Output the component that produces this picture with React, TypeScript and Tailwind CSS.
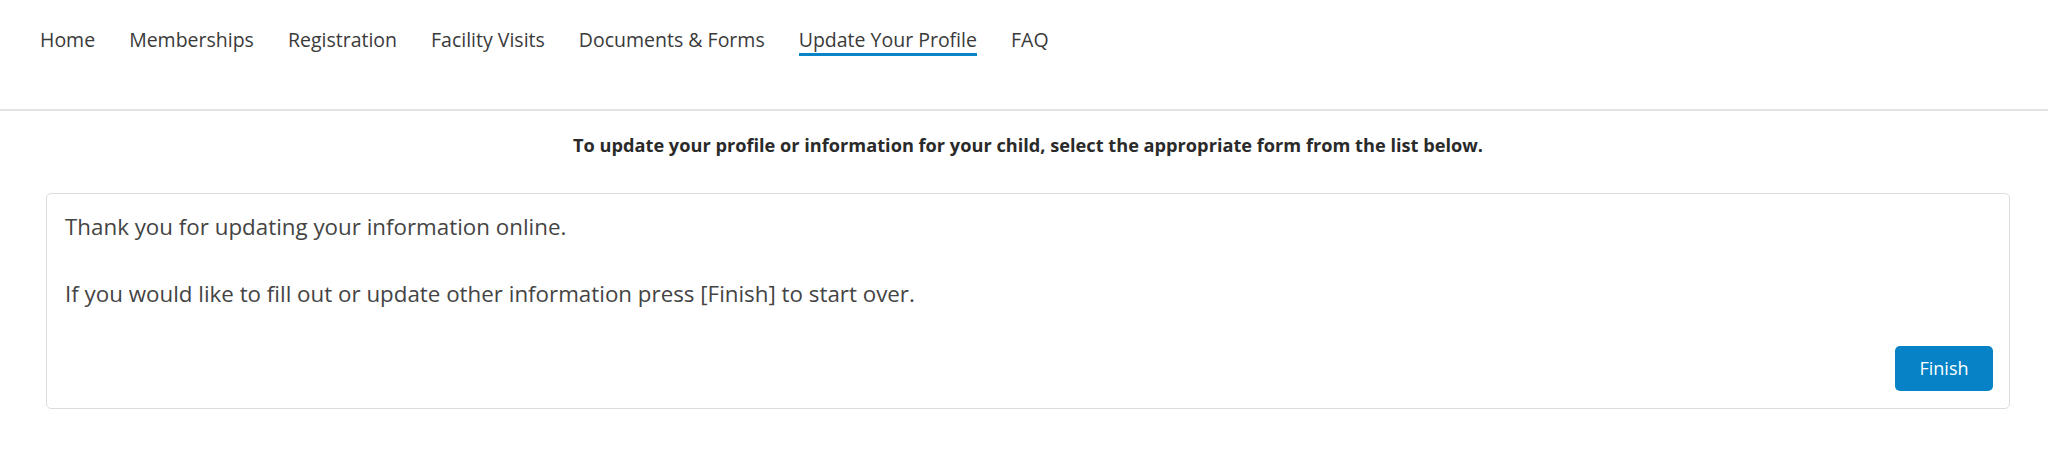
const navItems = [
  "Home",
  "Memberships",
  "Registration",
  "Facility Visits",
  "Documents & Forms",
  "Update Your Profile",
  "FAQ",
];

const ACTIVE = "Update Your Profile";

export default function App() {
  return (
    <div
      className="min-h-[461px] w-full bg-white text-[#3b3b3b]"
      style={{ fontFamily: '"Open Sans", "Liberation Sans", sans-serif' }}
    >
      {/* top nav */}
      <header className="h-[109px] pl-[40px] pt-[27px]">
        <nav className="flex items-start gap-[34px]">
          {navItems.map((item) => (
            <a
              key={item}
              href="#"
              className={
                item === ACTIVE
                  ? "border-b-[3px] border-[#0a84c9] text-[19.5px] leading-[26px] text-[#3a3a3a]"
                  : "border-b-[3px] border-transparent text-[19.5px] leading-[26px] text-[#3a3a3a]"
              }
            >
              {item}
            </a>
          ))}
        </nav>
      </header>
      <div className="h-[2px] bg-[#e3e3e3]" />

      {/* main */}
      <main className="pl-[46px] pr-[38px] pt-[22px]">
        <p className="text-center text-[18.2px] font-bold leading-[25px] text-[#2a2a2a]">
          To update your profile or information for your child, select the
          appropriate form from the list below.
        </p>

        <div className="mt-[35px] flex flex-col rounded-[5px] border border-[#dcdcdc] pl-[18px] pr-[16px] pt-[16px] pb-[17px]">
          <p className="text-[22.35px] leading-[33.5px] text-[#444444]">
            Thank you for updating your information online.
            <br />
            <br />
            If you would like to fill out or update other information press
            [Finish] to start over.
          </p>
          <div className="mt-[35px] flex justify-end">
            <button
              type="button"
              className="h-[45px] w-[98px] rounded-[5px] bg-[#0583c6] text-[18px] text-white"
            >
              Finish
            </button>
          </div>
        </div>
      </main>
    </div>
  );
}
